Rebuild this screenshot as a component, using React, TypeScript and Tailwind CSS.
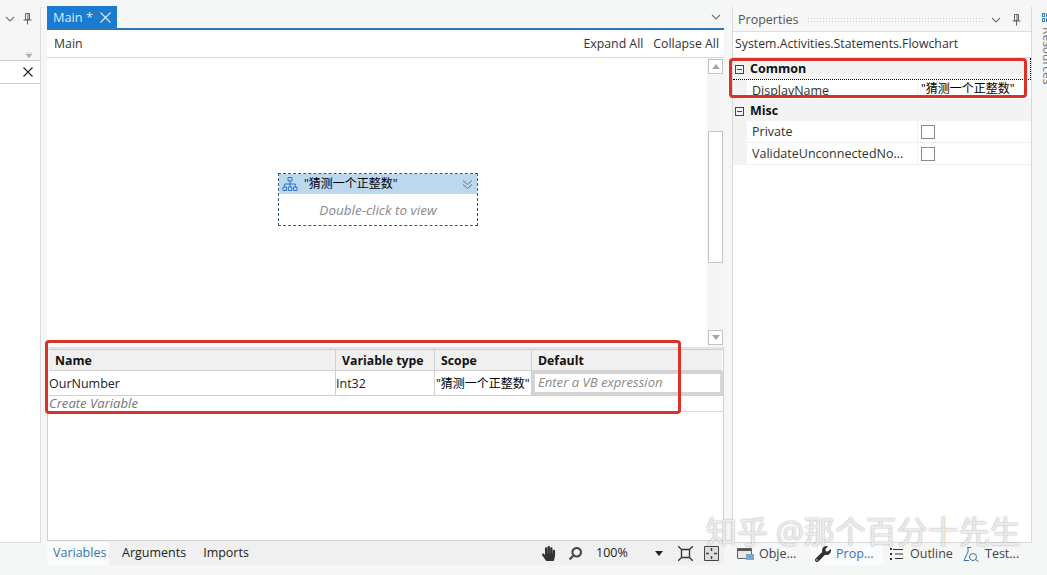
import React from "react";
import { FaHandPaper, FaSearch, FaWrench } from "react-icons/fa";

const ui = { fontFamily: '"Open Sans", "Noto Sans CJK SC", sans-serif' };

function Chevron({ className = "" }: { className?: string }) {
  return (
    <svg width="10" height="6" viewBox="0 0 10 6" className={className}>
      <path d="M1 1l4 4 4-4" fill="none" stroke="#6f7377" strokeWidth="1.1" />
    </svg>
  );
}

function Pin() {
  return (
    <svg width="9" height="12" viewBox="0 0 9 12">
      <path d="M2.5.5h4v6h-4zM5 1v5.5M.5 7h8M4.500 7v4.500" fill="none" stroke="#5f6368" strokeWidth="1" />
    </svg>
  );
}

function ScrollBtn({ down }: { down?: boolean }) {
  return (
    <div className="w-[15px] h-[15px] border border-[#c4c4c4] bg-white flex items-center justify-center">
      <svg width="8" height="5" viewBox="0 0 8 5">
        <path d={down ? "M0 0h8L4 5z" : "M0 5h8L4 0z"} fill="#a6a6a6" />
      </svg>
    </div>
  );
}

function Expander() {
  return (
    <div className="w-[9px] h-[9px] border border-[#444] flex items-center justify-center shrink-0">
      <div className="w-[5px] h-px bg-[#444]" />
    </div>
  );
}

function Check() {
  return <div className="w-[14px] h-[14px] border border-[#8a8a8a] bg-white" />;
}

function FlowIcon() {
  return (
    <svg width="16" height="16" viewBox="0 0 16 16" fill="none" stroke="#2f78c4" strokeWidth="1">
      <path d="M6 1.500h4v3.500H6zM1 11h3.500v3.500H1zM6.300 11h3.500v3.500H6.300zM11.500 11H15v3.500h-3.500zM8 5v6M2.700 11V8h10.600v3" />
    </svg>
  );
}

function LeftPanel() {
  return (
    <div className="w-[41px] mt-[7px] h-[536px] bg-white border-r border-b border-[#dcdcdc] flex flex-col shrink-0">
      <div className="h-[24px] bg-[#f6f6f6] flex items-center justify-end gap-[8px] pr-[8px]">
        <Chevron />
        <Pin />
      </div>
      <div className="h-[30px] bg-[#f6f6f6] border-b border-[#cfcfcf] flex items-end justify-end pr-[8px] pb-[2px]">
        <svg width="6" height="6" viewBox="0 0 6 6">
          <path d="M0 0h6M0 2h6L3 6z" fill="#aaa" stroke="#aaa" strokeWidth=".5" />
        </svg>
      </div>
      <div className="h-[23px] border-b border-[#cfcfcf] flex items-center justify-end pr-[7px]">
        <svg width="10" height="10" viewBox="0 0 10 10">
          <path d="M.5.5l9 9M9.500.5l-9 9" stroke="#222" strokeWidth="1.100" />
        </svg>
      </div>
    </div>
  );
}

function Canvas() {
  return (
    <div className="h-[289px] flex">
      <div className="flex-1 flex justify-center pt-[115px] pl-[2px]">
        <div className="w-[200px] h-[53px] border border-dashed border-[#3d5a75] self-start">
          <div className="h-[20px] bg-[#bcd8ee] flex items-center pl-[3px] pr-[4px] text-[12px] text-black">
            <FlowIcon />
            <span className="ml-[6px]">"猜测一个正整数"</span>
            <svg width="11" height="11" viewBox="0 0 11 11" className="ml-auto">
              <path d="M1 1.500l4.500 4 4.500-4M1 5.500l4.500 4 4.500-4" fill="none" stroke="#5d7085" strokeWidth="1" />
            </svg>
          </div>
          <div className="text-center italic text-[13.500px] text-[#8a8a8a] pt-[6px]">Double-click to view</div>
        </div>
      </div>
      <div className="w-[17px] bg-[#f5f5f5] flex flex-col items-center pt-px pb-[2px]">
        <ScrollBtn />
        <div className="mt-[57px] w-[15px] h-[132px] border border-[#c4c4c4] bg-white" />
        <div className="mt-auto">
          <ScrollBtn down />
        </div>
      </div>
    </div>
  );
}

function VariableTable() {
  return (
    <div className="flex-1 flex flex-col border-l border-r border-b border-[#d0d0d0] pl-px">
      <div className="h-[3px] bg-[#e4e4e4] border-b border-[#d0d0d0] -ml-px" />
      <div className="h-[21px] flex bg-[#f0f0f0] border-b border-[#d0d0d0] font-bold text-[12.300px] text-[#111] mr-px">
        <div className="w-[287px] pl-[6px] border-r border-[#d0d0d0] leading-[22px]">Name</div>
        <div className="w-[99px] pl-[6px] border-r border-[#d0d0d0] leading-[22px]">Variable type</div>
        <div className="w-[97px] pl-[6px] border-r border-[#d0d0d0] leading-[22px]">Scope</div>
        <div className="flex-1 pl-[6px] leading-[22px]">Default</div>
      </div>
      <div className="h-[25px] flex border-b border-[#d0d0d0] text-[12.500px] text-[#222]">
        <div className="w-[287px] border-r border-[#d0d0d0] leading-[26px]">OurNumber</div>
        <div className="w-[99px] border-r border-[#d0d0d0] leading-[26px]">Int32</div>
        <div className="w-[97px] border-r border-[#d0d0d0] pl-px text-[12px] text-black leading-[25px] whitespace-nowrap overflow-hidden">"猜测一个正整数"</div>
        <div className="flex-1 border-[3px] border-[#d4d4d4] pl-[3px] italic text-[#8a8a8a] text-[13.100px] leading-[17px]">Enter a VB expression</div>
      </div>
      <div className="h-[16px] border-b border-[#d9d9d9] italic text-[13.100px] text-[#777] leading-[15px]">Create Variable</div>
      <div className="flex-1 bg-white" />
    </div>
  );
}

function CenterPanel() {
  return (
    <div className="w-[677px] ml-[6px] mt-[6px] shrink-0 flex flex-col h-[559px]">
      <div className="h-[22px] flex items-center">
        <div className="w-[70px] h-full bg-[#1a7bd0] text-[#d7ecff] text-[12.800px] flex items-center pl-[6px] pt-px gap-[7px]">
          Main *
          <svg width="11" height="11" viewBox="0 0 11 11">
            <path d="M.5.5l10 10M10.500.5l-10 10" stroke="#d7ecff" strokeWidth="1.100" />
          </svg>
        </div>
        <Chevron className="ml-auto mr-[3px]" />
      </div>
      <div className="h-[2px] bg-[#2b79b9]" />
      <div className="h-[28px] bg-white border-b border-[#d9d9d9] flex items-center justify-between pl-[7px] pr-[5px] pt-[2px] text-[12.300px] text-[#333]">
        <span>Main</span>
        <span className="flex gap-[10px]">
          <span>Expand All</span>
          <span>Collapse All</span>
        </span>
      </div>
      <div className="flex-1 bg-white flex flex-col">
        <Canvas />
        <VariableTable />
      </div>
      <div className="h-[24px] flex items-center text-[12.500px] text-[#222] bg-[#f0f0f0] pt-px">
        <div className="h-full w-[62px] bg-[#f9fbfc] text-[#3a74a8] flex items-center pl-[6px]">Variables</div>
        <span className="ml-[13px]">Arguments</span>
        <span className="ml-[17px]">Imports</span>
        <div className="ml-auto flex items-center pr-[5px]">
          <FaHandPaper size={15} color="#333" />
          <FaSearch size={13} color="#444" className="ml-[13px] -scale-x-100" />
          <span className="ml-[14px] w-[59px]">100%</span>
          <svg width="8" height="5" viewBox="0 0 8 5">
            <path d="M0 0h8L4 5z" fill="#222" />
          </svg>
          <svg width="15" height="15" viewBox="0 0 15 15" className="ml-[15px]" fill="none" stroke="#333">
            <path d="M3.500 3.500h8v8h-8zM0 0l4 4M15 0l-4 4M0 15l4-4M15 15l-4-4" strokeWidth="1.300" />
          </svg>
          <svg width="15" height="15" viewBox="0 0 15 15" className="ml-[11px]" fill="#ddd" stroke="#444">
            <path d="M.5.500h14v14H.5z" />
            <path d="M7.500 2v3M7.500 10v3M2 7.500h3M10 7.500h3" strokeWidth="1.500" />
          </svg>
        </div>
      </div>
    </div>
  );
}

function PropRow({ label, children, tall }: { label: string; children?: React.ReactNode; tall?: boolean }) {
  return (
    <div className={`flex ${tall ? "h-[20px]" : "h-[22px]"}`}>
      <div className="w-[14px] bg-[#f3f3f3] shrink-0" />
      <div className="w-[171px] pl-[5px] border-r border-[#f0f0f0] border-b text-[12.500px] text-[#333] leading-[21px] whitespace-nowrap overflow-hidden">{label}</div>
      <div className="flex-1 flex items-center pl-[3px] border-b border-[#f0f0f0]">{children}</div>
    </div>
  );
}

function PropGroup({ label }: { label: string }) {
  return (
    <div className="h-[21px] bg-[#f3f3f3] flex items-center pl-[2px] pt-px gap-[6px] font-bold text-[12.500px] text-[#111]">
      <Expander />
      {label}
    </div>
  );
}

function RightPanel() {
  return (
    <div className="w-[300px] ml-[8px] mt-[7px] h-[536px] bg-white border-x border-b border-[#d9d9d9] flex flex-col shrink-0">
      <div className="h-[24px] bg-[#f7f7f7] flex items-center pl-[5px] pr-[10px] pt-[2px] text-[12.500px] text-[#555]">
        Properties
        <div className="flex-1 h-[6px] mx-[8px] bg-[radial-gradient(#c8c8c8_1px,transparent_1px)] bg-[length:3px_3px]" />
        <Chevron className="mr-[11px]" />
        <Pin />
      </div>
      <div className="h-[27px] border-y border-[#dedede] pl-[2px] text-[12.300px] text-[#333] leading-[23px]">System.Activities.Statements.Flowchart</div>
      <div className="border-b border-r border-dotted border-black h-[22px]">
        <PropGroup label="Common" />
      </div>
      <PropRow label="DisplayName" tall>
        <span className="text-[12px] text-black whitespace-nowrap pb-[2px]">"猜测一个正整数"</span>
      </PropRow>
      <PropGroup label="Misc" />
      <PropRow label="Private">
        <Check />
      </PropRow>
      <PropRow label="ValidateUnconnectedNo...">
        <Check />
      </PropRow>
    </div>
  );
}

function DockTabs() {
  return (
    <div className="flex h-[22px] items-center text-[12.500px] text-[#444] whitespace-nowrap">
      <div className="w-[78px] flex items-center gap-[5px] pl-[5px]">
        <svg width="17" height="14" viewBox="0 0 17 14">
          <path d="M.5 1.500h14v10H.5z" fill="#e8e8e8" stroke="#666" />
          <path d="M.5 1.500h14v2.500H.5z" fill="#555" />
          <path d="M9 7h8v6H9z" fill="#7fa6c9" />
        </svg>
        Obje...
      </div>
      <div className="w-[73px] h-full bg-[#f9fbfc] flex items-center gap-[5px] pl-[5px] text-[#3a74a8]">
        <FaWrench size={16} color="#333" />
        Prop...
      </div>
      <div className="w-[80px] flex items-center gap-[6px] pl-[7px]">
        <svg width="14" height="14" viewBox="0 0 14 14" stroke="#333">
          <path d="M3 2.500h10M5 7h8M5 11.500h8" />
          <path d="M0 1h2v2H0zM0 6h2v2H0zM0 11h2v2H0z" fill="#333" stroke="none" />
        </svg>
        Outline
      </div>
      <div className="flex items-center gap-[6px]">
        <svg width="16" height="15" viewBox="0 0 16 15" fill="none" stroke="#3a74a8">
          <path d="M4 .5h4M5 1v4L1 13.500h5" />
          <circle cx="10" cy="10" r="3.500" />
          <path d="M12.500 12.500l3 2" />
        </svg>
        Test...
      </div>
    </div>
  );
}

export default function App() {
  return (
    <div className="relative w-[1047px] h-[575px] overflow-hidden bg-[#f5f6f6] flex" style={ui}>
      <LeftPanel />
      <CenterPanel />
      <div className="flex flex-col">
        <RightPanel />
        <div className="ml-[8px]">
          <DockTabs />
        </div>
      </div>
      <div className="w-[15px] relative">
        <div className="absolute left-[10px] top-[13px] w-[7px] h-[9px] grid grid-cols-2 gap-px">
          <div className="border border-[#3a7ab8]" />
          <div className="border border-[#3a7ab8]" />
          <div className="border border-[#3a7ab8]" />
          <div className="border border-[#3a7ab8]" />
        </div>
        <div className="absolute left-[9px] top-[27px] text-[12px] leading-none text-[#777] [writing-mode:vertical-rl]">Resources</div>
      </div>

      {/* red annotation boxes */}
      <div className="absolute left-[729px] top-[58px] w-[298px] h-[40px] border-[3px] border-[#d9322c] rounded-[4px]" />
      <div className="absolute left-[45px] top-[340px] w-[636px] h-[74px] border-[3px] border-[#d9322c] rounded-[4px]" />

      {/* watermark */}
      <div className="absolute left-[706px] top-[511px] text-[31px] leading-[40px] text-white/80 whitespace-nowrap [text-shadow:0_0_1.5px_#888]">知乎 @那个百分十先生</div>
    </div>
  );
}
